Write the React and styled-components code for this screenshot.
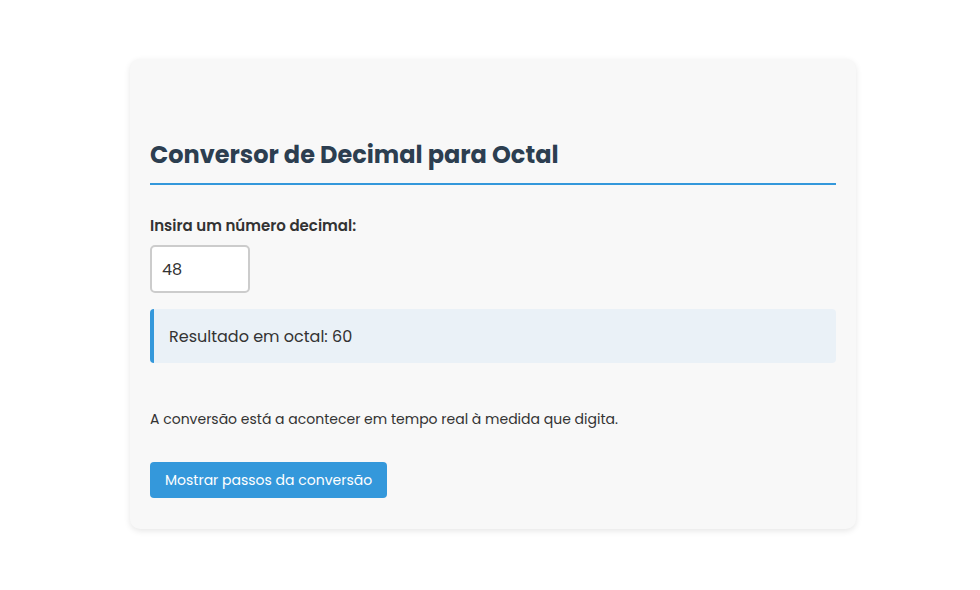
import React, { useState } from 'react'
import styled, { createGlobalStyle } from 'styled-components'

const GlobalStyle = createGlobalStyle`
  body {
    margin: 0;
    background: #ffffff;
    font-family: 'Poppins', 'Open Sans', 'Noto Sans', sans-serif;
    color: #333333;
  }
`

const Page = styled.div`
  width: 980px;
  height: 590px;
  padding-top: 59px;
  box-sizing: border-box;
`

const Card = styled.div`
  width: 726px;
  margin-left: 130px;
  box-sizing: border-box;
  padding: 78px 20px 31px;
  background: #f8f8f8;
  border-radius: 10px;
  box-shadow: 0 2px 6px rgba(0, 0, 0, 0.1);
  display: flex;
  flex-direction: column;
  align-items: flex-start;
`

const Title = styled.h1`
  align-self: stretch;
  margin: 0 0 30px;
  padding-bottom: 10px;
  border-bottom: 2px solid #3498db;
  font-size: 24px;
  line-height: 36px;
  font-weight: 700;
  color: #2c3e50;
`

const Label = styled.label`
  font-size: 15px;
  font-weight: 600;
  line-height: 22px;
  color: #333;
  margin-bottom: 8px;
`

const Input = styled.input`
  width: 100px;
  height: 48px;
  box-sizing: border-box;
  padding: 0 10px;
  border: 2px solid #cccccc;
  border-radius: 5px;
  background: #ffffff;
  font-family: inherit;
  font-size: 16px;
  color: #333;
  outline: none;
`

const Result = styled.div`
  align-self: stretch;
  margin-top: 16px;
  height: 54px;
  box-sizing: border-box;
  padding: 0 15px;
  display: flex;
  align-items: center;
  background: #eaf1f7;
  border-left: 4px solid #3498db;
  border-radius: 4px;
  font-size: 16px;
  color: #333;
`

const Note = styled.p`
  margin: 45px 0 0;
  font-size: 14px;
  line-height: 22px;
  color: #333;
`

const Button = styled.button`
  margin-top: 32px;
  height: 36px;
  padding: 0 15px;
  border: none;
  border-radius: 4px;
  background: #3498db;
  color: #ffffff;
  font-family: inherit;
  font-size: 14px;
  cursor: pointer;
`

const App = () => {
  const [value, setValue] = useState('48')
  const n = parseInt(value, 10)
  const octal = isNaN(n) ? '' : n.toString(8)

  return (
    <Page>
      <GlobalStyle />
      <Card>
        <Title>Conversor de Decimal para Octal</Title>
        <Label htmlFor="dec">Insira um número decimal:</Label>
        <Input id="dec" value={value} onChange={(e) => setValue(e.target.value)} />
        <Result>Resultado em octal: {octal}</Result>
        <Note>A conversão está a acontecer em tempo real à medida que digita.</Note>
        <Button>Mostrar passos da conversão</Button>
      </Card>
    </Page>
  )
}

export default App
